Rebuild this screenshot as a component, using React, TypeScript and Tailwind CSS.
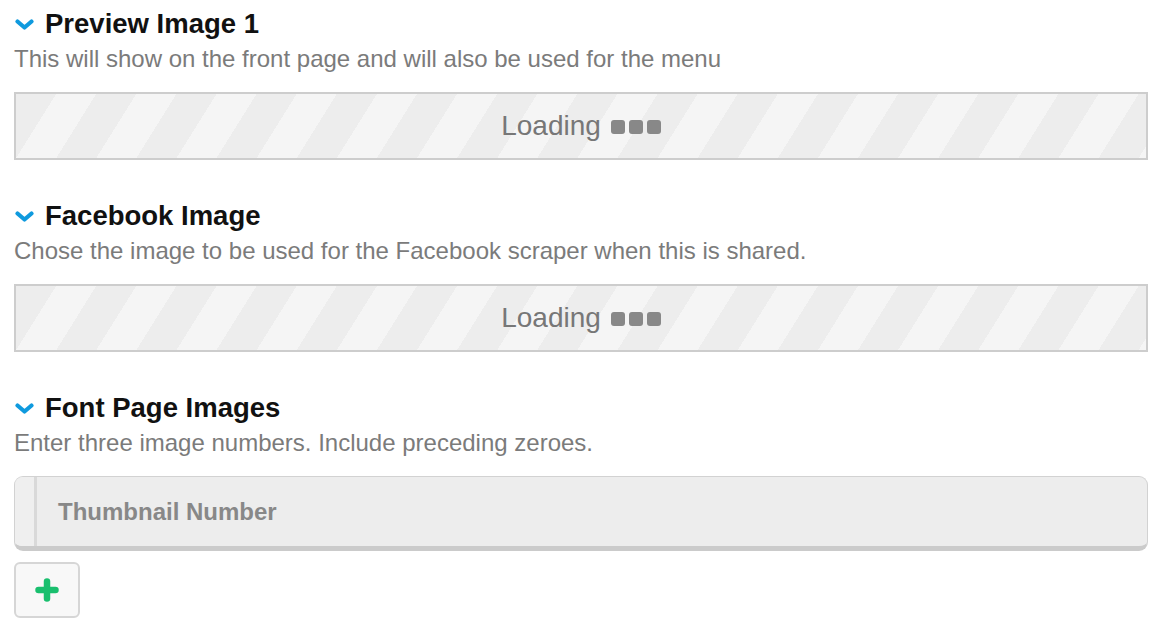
import React from "react";

const stripe: React.CSSProperties = {
  backgroundImage:
    "repeating-linear-gradient(122deg, #ededed 0px, #ededed 34px, #f5f5f5 34px, #f5f5f5 68px)",
};

function Chevron() {
  return (
    <svg width="19" height="11" viewBox="0 0 19 11" className="shrink-0">
      <polyline points="2.5,2.5 9.5,8.5 16.5,2.5" fill="none" stroke="#0f9ade" strokeWidth="4.2" strokeLinecap="round" strokeLinejoin="round" />
    </svg>
  );
}

function Header({ title, sub }: { title: string; sub: string }) {
  return (
    <div>
      <div className="flex items-center gap-[11px] pl-[1px] h-[34px]">
        <Chevron />
        <span className="text-[27.5px] leading-[34px] font-bold text-[#111]">{title}</span>
      </div>
      <div className="mt-[3px] text-[24px] leading-[30px] text-[#7b7b7b]">{sub}</div>
    </div>
  );
}

function Loading() {
  return (
    <div
      className="mt-[18px] h-[68px] border-2 border-[#cdcdcd] flex items-center justify-center"
      style={stripe}
    >
      <span className="text-[28px] leading-[28px] text-[#777]">Loading</span>
      <div className="flex gap-[4px] ml-[10px] mt-[2px]">
        <div className="w-[14px] h-[14px] rounded-[3px] bg-[#888]" />
        <div className="w-[14px] h-[14px] rounded-[3px] bg-[#888]" />
        <div className="w-[14px] h-[14px] rounded-[3px] bg-[#888]" />
      </div>
    </div>
  );
}

export default function App() {
  return (
    <div
      className="w-[1154px] h-[628px] bg-white pl-[14px] pr-[6px] pt-[7px] overflow-hidden"
      style={{ fontFamily: '"Liberation Sans", Arial, sans-serif' }}
    >
      <Header title="Preview Image 1" sub="This will show on the front page and will also be used for the menu" />
      <Loading />
      <div className="mt-[39px]">
        <Header title="Facebook Image" sub="Chose the image to be used for the Facebook scraper when this is shared." />
        <Loading />
      </div>
      <div className="mt-[39px]">
        <Header title="Font Page Images" sub="Enter three image numbers. Include preceding zeroes." />
        <div className="mt-[18px] h-[75px] rounded-[9px] border border-[#d2d2d2] border-b-[5px] border-b-[#cbcbcb] bg-[#ededed] flex overflow-hidden">
          <div className="w-[19px] bg-[#efefef] shrink-0" />
          <div className="w-[3px] bg-[#d9d9d9] shrink-0" />
          <div className="flex items-center pl-[21px] text-[24px] font-bold text-[#888]">Thumbnail Number</div>
        </div>
        <button className="mt-[11px] w-[66px] h-[56px] rounded-[6px] border-2 border-[#d6d6d6] bg-[#f8f8f8] flex items-center justify-center">
          <svg width="24" height="24" viewBox="0 0 24 24">
            <path d="M12 3.5 V20.5 M3.5 12 H20.5" stroke="#19bf6e" strokeWidth="6.5" strokeLinecap="round" />
          </svg>
        </button>
      </div>
    </div>
  );
}
